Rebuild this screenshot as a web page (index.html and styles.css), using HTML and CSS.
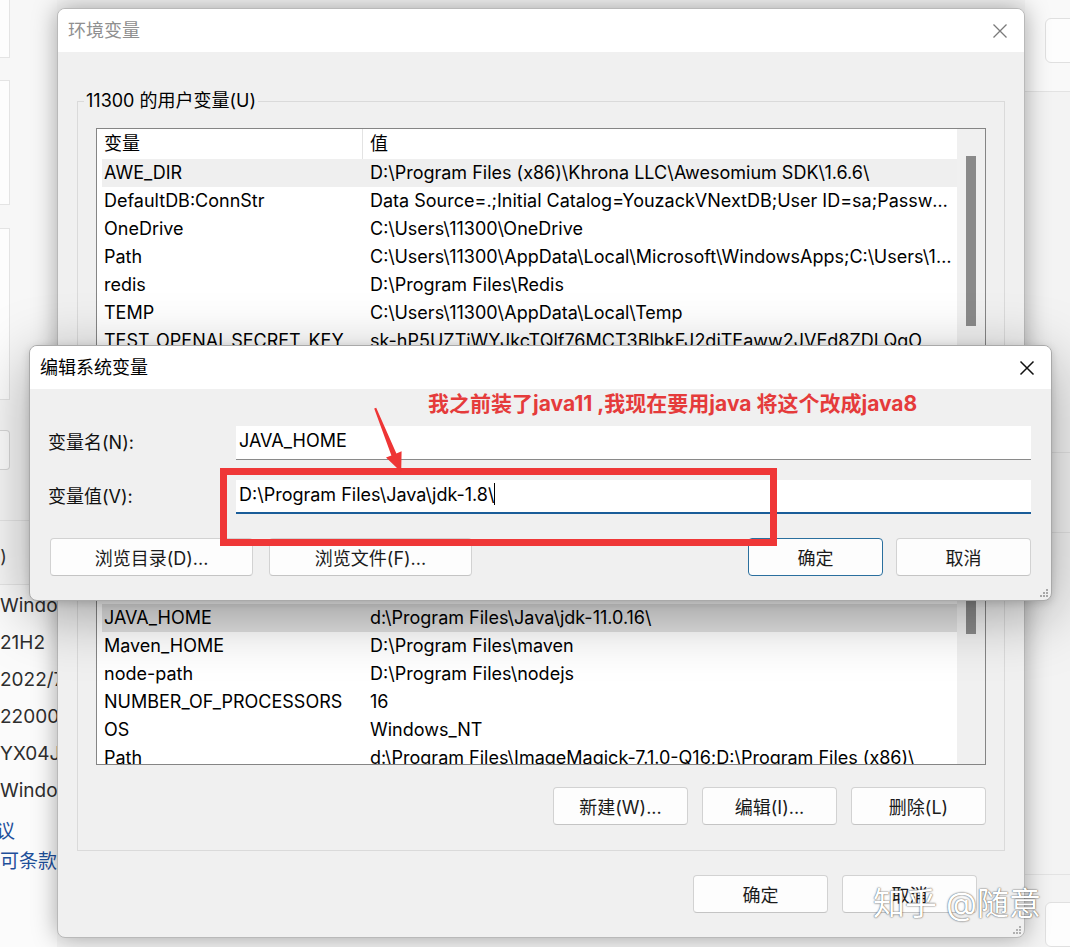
FILE: index.html
```html
<!DOCTYPE html>
<html lang="zh-CN">
<head>
<meta charset="utf-8">
<title>环境变量</title>
<link rel="stylesheet" href="styles.css">
</head>
<body>
<div class="desktop">
  <aside class="bg-left">
    <div class="bg-card c1"></div>
    <div class="bg-card c2"></div>
    <div class="bg-card c3"></div>
    <div class="bg-btn"></div>
    <div class="bg-sep"></div>
    <div class="bg-paren">0)</div>
    <div class="bg-spec">
      <div class="spec">Windows 11 家庭中文版</div>
      <div class="spec">21H2</div>
      <div class="spec">2022/7/1</div>
      <div class="spec">22000.832</div>
      <div class="spec">YX04JP</div>
      <div class="spec">Windows Feature Experience Pack</div>
      <div class="link l1">议</div>
      <div class="link l2">可条款</div>
    </div>
  </aside>
  <div class="bg-mid"></div>
  <aside class="bg-right">
    <div class="r-top"><div class="r-btn"></div></div>
    <div class="r-sec s1"></div>
    <div class="r-sec s2"></div>
    <div class="r-sec s3"></div>
    <div class="r-bottom"><div class="r-btn b2"></div></div>
  </aside>
</div>

<!-- 环境变量 window -->
<section class="win env">
  <header class="titlebar">
    <span class="title inactive">环境变量</span>
    <svg class="close grey" viewBox="0 0 16 16" width="16" height="16"><path d="M1.5 1.5 L14.5 14.5 M14.5 1.5 L1.5 14.5"/></svg>
  </header>
  <div class="env-body">
    <fieldset class="group">
      <legend>11300 的用户变量(U)</legend>
      <div class="list">
        <div class="list-main">
          <div class="list-head"><span>变量</span><span>值</span></div>
          <div class="row sel"><span>AWE_DIR</span><span>D:\Program Files (x86)\Khrona LLC\Awesomium SDK\1.6.6\</span></div>
          <div class="row"><span>DefaultDB:ConnStr</span><span>Data Source=.;Initial Catalog=YouzackVNextDB;User ID=sa;Password=123456</span></div>
          <div class="row"><span>OneDrive</span><span>C:\Users\11300\OneDrive</span></div>
          <div class="row"><span>Path</span><span>C:\Users\11300\AppData\Local\Microsoft\WindowsApps;C:\Users\11300\AppData</span></div>
          <div class="row"><span>redis</span><span>D:\Program Files\Redis</span></div>
          <div class="row"><span>TEMP</span><span>C:\Users\11300\AppData\Local\Temp</span></div>
          <div class="row"><span>TEST_OPENAI_SECRET_KEY</span><span>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</span></div>
          <div class="row"><span>TMP</span><span>C:\Users\11300\AppData\Local\Temp</span></div>
        </div>
        <div class="scroll"><div class="thumb t-user"></div></div>
      </div>
      <div class="btn-row">
        <button class="btn">新建(N)...</button>
        <button class="btn">编辑(E)...</button>
        <button class="btn">删除(D)</button>
      </div>
    </fieldset>

    <fieldset class="group sys">
      <legend>系统变量(S)</legend>
      <div class="list">
        <div class="list-main">
          <div class="list-head"><span>变量</span><span>值</span></div>
          <div class="row"><span>ComSpec</span><span>C:\WINDOWS\system32\cmd.exe</span></div>
          <div class="row"><span>DriverData</span><span>C:\Windows\System32\Drivers\DriverData</span></div>
          <div class="row sel2"><span>JAVA_HOME</span><span>d:\Program Files\Java\jdk-11.0.16\</span></div>
          <div class="row"><span>Maven_HOME</span><span>D:\Program Files\maven</span></div>
          <div class="row"><span>node-path</span><span>D:\Program Files\nodejs</span></div>
          <div class="row"><span>NUMBER_OF_PROCESSORS</span><span>16</span></div>
          <div class="row"><span>OS</span><span>Windows_NT</span></div>
          <div class="row"><span>Path</span><span>d:\Program Files\ImageMagick-7.1.0-Q16;D:\Program Files (x86)\</span></div>
        </div>
        <div class="scroll"><div class="thumb t-sys"></div></div>
      </div>
      <div class="btn-row">
        <button class="btn">新建(W)...</button>
        <button class="btn">编辑(I)...</button>
        <button class="btn">删除(L)</button>
      </div>
    </fieldset>

    <div class="btn-row footer">
      <button class="btn">确定</button>
      <button class="btn">取消</button>
    </div>
  </div>
  <svg class="grip" viewBox="0 0 10 10" width="10" height="10"><g fill="#b0b0b0"><rect x="7" y="1" width="2" height="2"/><rect x="4" y="4" width="2" height="2"/><rect x="7" y="4" width="2" height="2"/><rect x="1" y="7" width="2" height="2"/><rect x="4" y="7" width="2" height="2"/><rect x="7" y="7" width="2" height="2"/></g></svg>
</section>

<!-- 编辑系统变量 dialog -->
<section class="win edit">
  <header class="titlebar">
    <span class="title">编辑系统变量</span>
    <svg class="close dark" viewBox="0 0 16 16" width="16" height="16"><path d="M1.5 1.5 L14.5 14.5 M14.5 1.5 L1.5 14.5"/></svg>
  </header>
  <div class="edit-body">
    <label class="lbl">变量名(N):</label>
    <div class="field">JAVA_HOME</div>
    <label class="lbl">变量值(V):</label>
    <div class="field focus">D:\Program Files\Java\jdk-1.8\<span class="caret"></span></div>
    <div class="edit-btns">
      <div class="grp">
        <button class="btn wide">浏览目录(D)...</button>
        <button class="btn wide">浏览文件(F)...</button>
      </div>
      <div class="grp right">
        <button class="btn default">确定</button>
        <button class="btn">取消</button>
      </div>
    </div>
  </div>
  <svg class="grip" viewBox="0 0 10 10" width="10" height="10"><g fill="#a8a8a8"><rect x="7" y="1" width="2" height="2"/><rect x="4" y="4" width="2" height="2"/><rect x="7" y="4" width="2" height="2"/><rect x="1" y="7" width="2" height="2"/><rect x="4" y="7" width="2" height="2"/><rect x="7" y="7" width="2" height="2"/></g></svg>
</section>

<!-- annotations -->
<div class="note">我之前装了java11 ,我现在要用java 将这个改成java8</div>
<div class="redbox"></div>
<svg class="arrow" viewBox="0 0 1070 947" width="1070" height="947">
  <polygon points="374.2,408.5 376.2,407.7 396.4,453.6 401.6,451.2 401.2,472 386,457.6 391.4,455.4" fill="#ee3535"/>
</svg>
<div class="watermark">知乎 @随意</div>
</body>
</html>
```
FILE: styles.css
```css
* { box-sizing: border-box; }
html, body {
  margin: 0;
  width: 1070px;
  height: 947px;
  overflow: hidden;
}
body {
  position: relative;
  font-family: Inter, "Noto Sans CJK SC", sans-serif;
  font-size: 18px;
  color: #000;
  background: #f4f4f4;
}

/* ---------- background settings page ---------- */
.desktop {
  display: flex;
  height: 947px;
}
.bg-left {
  width: 57px;
  flex: none;
  display: flex;
  flex-direction: column;
  background: #f7f7f7;
  overflow: hidden;
}
.bg-card {
  width: 10px;
  background: #fdfdfd;
  border: 1px solid #e4e4e4;
  border-left: none;
}
.c1 { height: 58px; border-top: none; }
.c2 { height: 125px; margin-top: 22px; }
.c3 { height: 172px; margin-top: 23px; }
.bg-btn {
  width: 10px;
  height: 40px;
  margin-top: 30px;
  background: #fdfdfd;
  border: 1px solid #d8d8d8;
  border-left: none;
  border-radius: 0 4px 4px 0;
}
.bg-sep {
  height: 1px;
  margin-top: 50px;
  background: #e6e6e6;
}
.bg-paren {
  margin-top: 25px;
  margin-left: -11px;
  font-size: 18px;
  color: #333;
  line-height: 24px;
}
.bg-spec {
  margin-top: 14px;
  flex: 1;
  background: #fbfbfb;
  border-top: 1px solid #e6e6e6;
  padding-top: 2px;
  white-space: nowrap;
}
.spec {
  font-size: 19px;
  line-height: 37px;
  color: #2e2e2e;
}
.link {
  font-size: 19px;
  line-height: 30px;
  color: #1e4f9a;
}
.link.l1 { margin-top: 8px; margin-left: -4px; }
.bg-mid { flex: 1; }
.bg-right {
  width: 45px;
  flex: none;
  display: flex;
  flex-direction: column;
  background: #f3f3f3;
}
.r-top {
  height: 94px;
  background: #f9f9f9;
  border-bottom: 1px solid #e3e3e3;
  padding: 18px 0 0 20px;
}
.r-btn {
  width: 40px;
  height: 45px;
  background: #fdfdfd;
  border: 1px solid #e0e0e0;
  border-radius: 6px;
}
.r-sec {
  border-bottom: 1px solid #e3e3e3;
}
.s1 { height: 369px; }
.s2 { height: 82px; }
.s3 { height: 350px; }
.r-bottom {
  flex: 1;
  padding: 27px 0 0 20px;
}

/* ---------- windows ---------- */
.win {
  position: absolute;
  background: #f0f0f0;
  border: 1px solid #b9b9b9;
  border-radius: 8px;
  overflow: hidden;
  display: flex;
  flex-direction: column;
}
.env {
  left: 57px;
  top: 8px;
  width: 968px;
  height: 930px;
  box-shadow: 0 0 24px rgba(0,0,0,0.34);
}
.edit {
  left: 29px;
  top: 345px;
  width: 1023px;
  height: 256px;
  border-color: #a9a9a9;
  box-shadow: 0 14px 60px rgba(0,0,0,0.34), 0 2px 8px rgba(0,0,0,0.15);
}
.titlebar {
  flex: none;
  height: 43px;
  background: #fff;
  display: flex;
  align-items: center;
  justify-content: space-between;
  padding: 0 16px 0 10px;
}
.title {
  font-size: 18px;
  line-height: 24px;
}
.title.inactive { color: #8f8f8f; }
.close {
  fill: none;
  stroke-width: 1.3;
}
.close.grey { stroke: #7a7a7a; }
.close.dark { stroke: #111; stroke-width: 1.5; }

/* ---------- env body ---------- */
.env-body {
  flex: 1;
  padding: 37px 19px 0 19px;
  display: flex;
  flex-direction: column;
}
.group {
  margin: 0;
  padding: 15px 18px 25px 18px;
  border: 1px solid #dadada;
  min-width: 0;
}
.group legend {
  margin-left: -12px;
  padding: 0 2px;
  font-size: 18px;
  line-height: 24px;
}
.group.sys { margin-top: 16px; }
.list {
  height: 248px;
  border: 1px solid #858585;
  background: #fff;
  display: grid;
  grid-template-columns: 1fr 28px;
  overflow: hidden;
}
.list-main {
  overflow: hidden;
  min-width: 0;
}
.list-head {
  height: 30px;
  display: grid;
  grid-template-columns: 266px 1fr;
  align-items: center;
  line-height: 30px;
}
.list-head span {
  padding-left: 7px;
}
.list-head span:first-child {
  border-right: 1px solid #e3e3e3;
}
.row {
  height: 28px;
  margin-left: 5px;
  display: grid;
  grid-template-columns: 261px 1fr;
  line-height: 28px;
}
.row span {
  white-space: nowrap;
  overflow: hidden;
  text-overflow: ellipsis;
}
.row span:first-child { padding-left: 2px; text-overflow: clip; }
.row span:last-child { padding-left: 7px; padding-right: 3px; }
.row.sel { background: #efefef; }
.row.sel2 { background: #e2e2e2; }
.scroll {
  background: #f0f0f0;
}
.thumb {
  width: 10px;
  margin-left: 9px;
  background: #8a8a8a;
}
.t-user { margin-top: 27px; height: 170px; }
.t-sys { margin-top: 26px; height: 90px; }

.btn-row {
  display: flex;
  justify-content: flex-end;
  gap: 14px;
  margin-top: 22px;
}
.btn {
  width: 135px;
  height: 38px;
  font: inherit;
  font-size: 18px;
  color: #1b1b1b;
  background: #fdfdfd;
  border: 1px solid #d2d2d2;
  border-bottom-color: #c4c4c4;
  border-radius: 4px;
  padding: 0;
}
.footer {
  margin-top: 24px;
  margin-right: 28px;
}

/* ---------- edit body ---------- */
.edit-body {
  flex: 1;
  padding: 37px 20px 0 18px;
  display: grid;
  grid-template-columns: 188px 1fr;
  grid-template-rows: 34px 34px 38px;
  align-content: start;
  row-gap: 20px;
  align-items: center;
}
.lbl {
  font-size: 18px;
  color: #111;
  margin-top: -4px;
}
.field {
  height: 34px;
  background: #fff;
  border-bottom: 1px solid #8a8a8a;
  padding-left: 3px;
  line-height: 30px;
  white-space: nowrap;
}
.field.focus {
  border-bottom: 2px solid #1a5d99;
}
.caret {
  display: inline-block;
  width: 1px;
  height: 22px;
  background: #000;
  vertical-align: -4px;
}
.edit-btns {
  grid-column: 1 / -1;
  display: flex;
  justify-content: space-between;
  padding-left: 2px;
  margin-top: 7px;
}
.edit-btns .grp {
  display: flex;
  gap: 16px;
}
.edit-btns .grp.right { gap: 13px; }
.btn.wide { width: 203px; }
.btn.default {
  border: 1px solid #2a6f9e;
}
.grip {
  position: absolute;
  right: 2px;
  bottom: 2px;
}

/* ---------- annotations ---------- */
.note {
  position: absolute;
  left: 428px;
  top: 391px;
  font-size: 21px;
  line-height: 26px;
  font-weight: bold;
  color: #e53b3b;
  white-space: nowrap;
}
.redbox {
  position: absolute;
  left: 220px;
  top: 468px;
  width: 557px;
  height: 78px;
  border: 7px solid #ef3737;
}
.arrow {
  position: absolute;
  left: 0;
  top: 0;
  pointer-events: none;
}
.watermark {
  position: absolute;
  left: 873px;
  top: 884px;
  font-size: 32px;
  line-height: 40px;
  color: #fff;
  white-space: nowrap;
  text-shadow: 0 0 2px rgba(0,0,0,0.55), 0 0 1px rgba(0,0,0,0.5);
}
```
